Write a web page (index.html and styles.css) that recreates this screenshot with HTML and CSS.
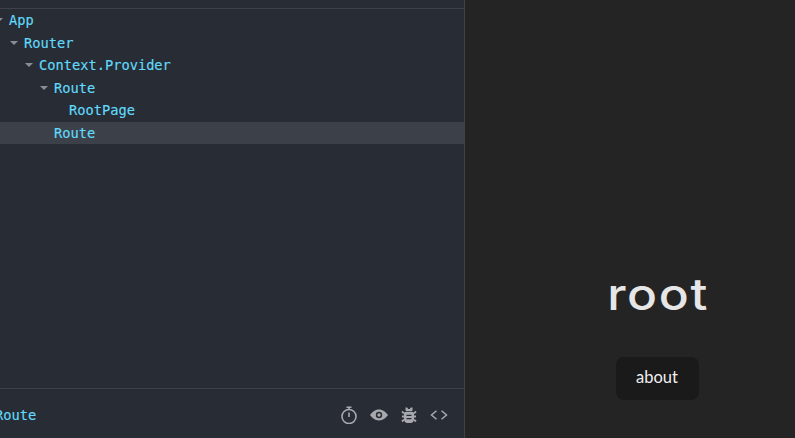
FILE: index.html
```html
<!DOCTYPE html>
<html lang="en">
<head>
    <meta charset="UTF-8">
    <title>root</title>
    <link rel="stylesheet" href="styles.css">
</head>
<body>
    <div class="devtools">
        <div class="top-bar"></div>
        <div class="tree">
            <div class="row depth-0"><span class="caret"></span>App</div>
            <div class="row depth-1"><span class="caret"></span>Router</div>
            <div class="row depth-2"><span class="caret"></span>Context.Provider</div>
            <div class="row depth-3"><span class="caret"></span>Route</div>
            <div class="row depth-4">RootPage</div>
            <div class="row depth-3 selected">Route</div>
        </div>
        <div class="footer">
            <span class="footer-name">Route</span>
            <div class="footer-icons">
                <svg class="icon" viewBox="0 0 18 18" width="18" height="18">
                    <path d="M6.500 1.200h5M9 1.200v2.600" fill="none" stroke="currentColor" stroke-width="1.600"/>
                    <circle cx="9" cy="10.500" r="7" fill="none" stroke="currentColor" stroke-width="1.600"/>
                    <path d="M9 6.500v4.400" fill="none" stroke="currentColor" stroke-width="1.600"/>
                </svg>
                <svg class="icon" viewBox="0 0 18 18" width="18" height="18">
                    <path fill-rule="evenodd" fill="currentColor" d="M9 3.600c3.900 0 7 2.700 9 5.400-2 2.700-5.100 5.400-9 5.400S2 11.700 0 9C2 6.300 5.100 3.600 9 3.600zM9 5.800a3.200 3.200 0 1 0 0 6.400 3.200 3.200 0 0 0 0-6.400zM9 7.300a1.700 1.700 0 1 1 0 3.400 1.700 1.700 0 0 1 0-3.400z"/>
                </svg>
                <svg class="icon" viewBox="0 0 18 18" width="18" height="18">
                    <path fill="currentColor" d="M5.500 1.500h1.800l.9 1.500h1.600l.9-1.500h1.800v2.800l-.6.900H6.100l-.6-.9zM5.500 6h7c.8 0 1.500.7 1.500 1.500v6c0 1.900-1.500 3.500-3.500 3.500h-3C5.500 17 4 15.400 4 13.500v-6C4 6.700 4.700 6 5.500 6z"/>
                    <path d="M2 5.500l2 1.800M16 5.500l-2 1.800M2 10.500h2M16 10.500h-2M2 15.500l2-1.800M16 15.500l-2-1.800" fill="none" stroke="currentColor" stroke-width="1.800"/>
                    <path d="M6.500 9.300h5M6.500 12.600h5" fill="none" stroke="#282c34" stroke-width="1.300"/>
                </svg>
                <svg class="icon" viewBox="0 0 18 18" width="18" height="18">
                    <path d="M6.500 4.800L1.500 9l5 4.200M11.500 4.800l5 4.200-5 4.200" fill="none" stroke="currentColor" stroke-width="1.500"/>
                </svg>
            </div>
        </div>
    </div>
    <div class="app">
        <h1 class="title">root</h1>
        <button class="nav-button" type="button">about</button>
    </div>
</body>
</html>
```

FILE: styles.css
```css
* {
    box-sizing: border-box;
}

html,
body {
    height: 100%;
    margin: 0;
    overflow: hidden;
}

body {
    display: flex;
}

.devtools {
    width: 465px;
    display: flex;
    flex-direction: column;
    flex-shrink: 0;
    background-color: #282c34;
    border-right: 1px solid #3e4148;
    font-family: "DejaVu Sans Mono", monospace;
    font-size: 13.7px;
    color: #61dafb;
    -webkit-text-stroke: 0.15px #61dafb;
}

.top-bar {
    height: 9px;
    border-bottom: 1px solid #3e4148;
}

.tree {
    flex: 1;
}

.row {
    height: 22.5px;
    display: flex;
    align-items: center;
    white-space: nowrap;
}

.row.selected {
    background-color: #3c4049;
}

.depth-0 { padding-left: 9px; }
.depth-1 { padding-left: 24px; }
.depth-2 { padding-left: 39px; }
.depth-3 { padding-left: 54px; }
.depth-4 { padding-left: 69px; }

.caret {
    width: 0;
    height: 0;
    margin-left: -14px;
    margin-right: 6px;
    border-left: 4px solid transparent;
    border-right: 4px solid transparent;
    border-top: 4px solid #8a8d93;
}

.footer {
    height: 50px;
    display: flex;
    align-items: center;
    justify-content: space-between;
    border-top: 1px solid #3e4148;
    padding-right: 16px;
}

.footer-name {
    margin-left: -5px;
    padding-top: 2px;
}

.footer-icons {
    display: flex;
    gap: 12px;
    color: #a7a9ae;
    padding-top: 3px;
}

.app {
    flex: 1;
    display: flex;
    flex-direction: column;
    align-items: center;
    background-color: #242424;
    font-family: Lato, sans-serif;
    padding-top: 263px;
    padding-left: 54px;
}

.title {
    margin: 0 0 0 2px;
    font-family: Inter, sans-serif;
    font-size: 44px;
    line-height: 62px;
    font-weight: 500;
    letter-spacing: 1.5px;
    color: #e6e6e6;
    transform: scaleX(1.13);
}

.nav-button {
    margin-top: 32px;
    width: 83px;
    height: 43px;
    padding-bottom: 5px;
    border: none;
    border-radius: 8px;
    background-color: #1a1a1a;
    color: #f0f0f0;
    font-family: inherit;
    font-size: 16.5px;
}
```
